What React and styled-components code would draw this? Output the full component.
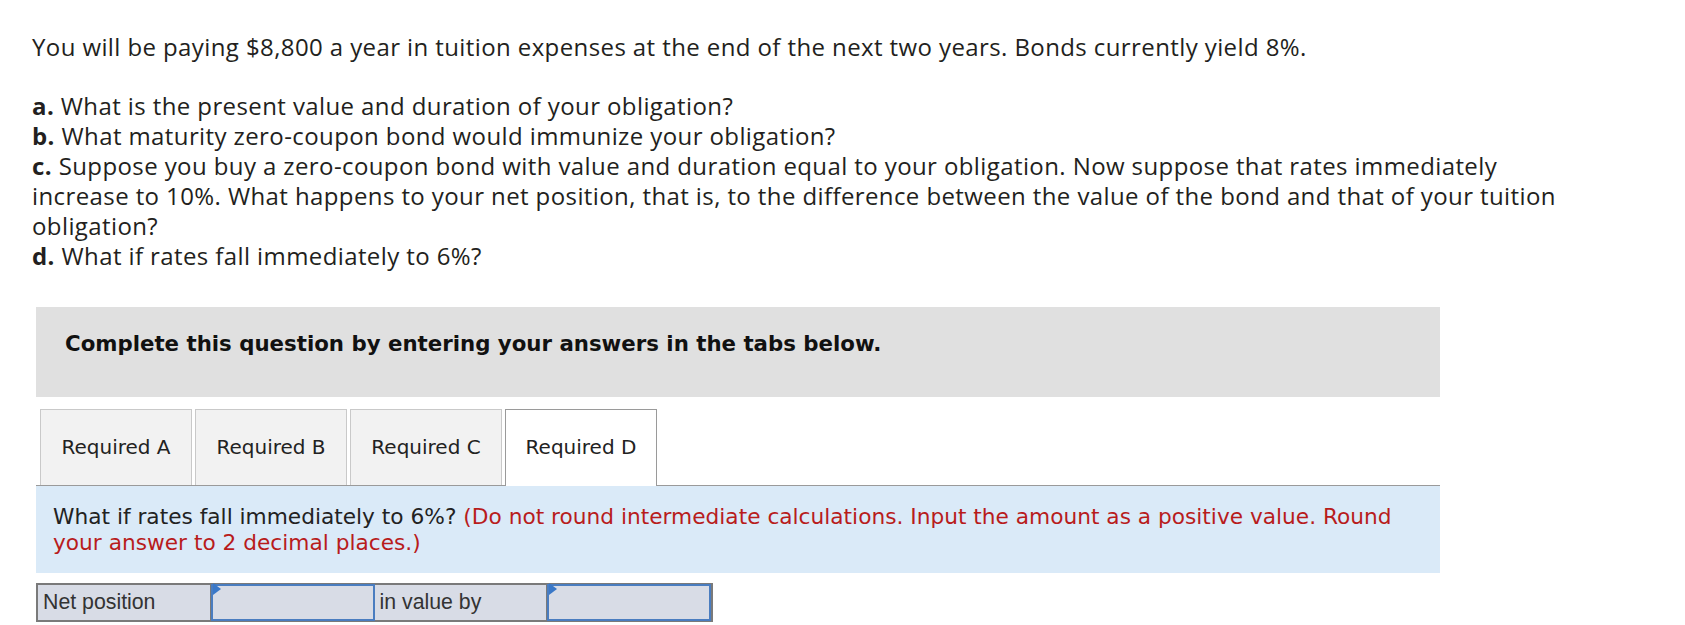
import React from 'react';
import styled, { createGlobalStyle } from 'styled-components';

const GlobalStyle = createGlobalStyle`
  body {
    margin: 0;
    background: #fff;
    font-family: 'Open Sans', 'Liberation Sans', sans-serif;
  }
`;

const parts = [
  { key: 'a', text: 'What is the present value and duration of your obligation?' },
  { key: 'b', text: 'What maturity zero-coupon bond would immunize your obligation?' },
  {
    key: 'c',
    text: 'Suppose you buy a zero-coupon bond with value and duration equal to your obligation. Now suppose that rates immediately increase to 10%. What happens to your net position, that is, to the difference between the value of the bond and that of your tuition obligation?',
  },
  { key: 'd', text: 'What if rates fall immediately to 6%?' },
];

const tabs = ['Required A', 'Required B', 'Required C', 'Required D'];

const App = () => {
  return (
    <Page>
      <GlobalStyle />
      <Question>
        <Intro>
          You will be paying $8,800 a year in tuition expenses at the end of the next two years. Bonds currently yield 8%.
        </Intro>
        {parts.map((p) => (
          <Part key={p.key}>
            <b>{p.key}.</b> {p.text}
          </Part>
        ))}
      </Question>

      <Panel>
        <Instructions>Complete this question by entering your answers in the tabs below.</Instructions>

        <TabRow>
          {tabs.map((t, i) => (
            <Tab key={t} $active={i === tabs.length - 1}>{t}</Tab>
          ))}
        </TabRow>

        <Prompt>
          What if rates fall immediately to 6%?{' '}
          <Hint>
            (Do not round intermediate calculations. Input the amount as a positive value. Round
            your answer to 2 decimal places.)
          </Hint>
        </Prompt>

        <AnswerRow>
          <Label>Net position</Label>
          <Input />
          <Label>in value by</Label>
          <Input />
        </AnswerRow>
      </Panel>
    </Page>
  );
};

const Page = styled.div`
  padding: 32px 0 0 32px;
`;

const Question = styled.div`
  color: #231f20;
  font-size: 24px;
  letter-spacing: 0.4px;
  line-height: 30px;
  b {
    font-weight: 700;
  }
`;

const Intro = styled.p`
  margin: 0 0 29px;
  white-space: nowrap;
`;

const Part = styled.p`
  margin: 0;
  max-width: 1545px;
`;

const Panel = styled.div`
  width: 1404px;
  margin: 36px 0 0 4px;
  font-family: 'DejaVu Sans', Verdana, sans-serif;
`;

const Instructions = styled.div`
  box-sizing: border-box;
  height: 90px;
  padding: 25px 29px 0;
  background: #e0e0e0;
  color: #111;
  font-size: 21.3px;
  font-weight: 700;
  line-height: 24px;
`;

const TabRow = styled.div`
  display: flex;
  align-items: flex-start;
  gap: 3px;
  margin-top: 12px;
  padding-left: 4px;
  border-bottom: 1px solid #9a9a9a;
`;

const Tab = styled.div`
  position: relative;
  box-sizing: border-box;
  width: 152px;
  height: ${(p) => (p.$active ? '77px' : '76px')};
  margin-bottom: ${(p) => (p.$active ? '-1px' : '0')};
  display: flex;
  align-items: center;
  justify-content: center;
  padding-bottom: 2px;
  border: 1px solid ${(p) => (p.$active ? '#9a9a9a' : '#c9c9c9')};
  border-bottom: none;
  background: ${(p) => (p.$active ? '#fff' : '#f2f2f2')};
  color: #222;
  font-size: 20px;
`;

const Prompt = styled.div`
  padding: 18px 17px 17px;
  background: #daeaf8;
  color: #222;
  font-size: 21.7px;
  line-height: 26px;
`;

const Hint = styled.span`
  color: #b81c1c;
`;

const AnswerRow = styled.div`
  display: flex;
  width: 677px;
  height: 39px;
  margin-top: 10px;
  box-sizing: border-box;
  border: 2px solid #7a7a7a;
  background: #d8dce6;
  font-family: 'Liberation Sans', Arial, sans-serif;
  font-size: 21.3px;
  color: #333;
`;

const Label = styled.div`
  display: flex;
  align-items: center;
  width: 173px;
  padding-left: 5px;
  box-sizing: border-box;
  border-right: 1px solid #7a7a7a;
`;

const Input = styled.div`
  position: relative;
  width: 164px;
  box-sizing: border-box;
  border: 2px solid #4a7dc0;
  margin: -1px 0;
  &::before {
    content: '';
    position: absolute;
    top: 0;
    left: 0;
    border-top: 6px solid transparent;
    border-bottom: 6px solid transparent;
    border-left: 8px solid #3a78c8;
    transform: translateY(-3px);
  }
`;

export default App;
